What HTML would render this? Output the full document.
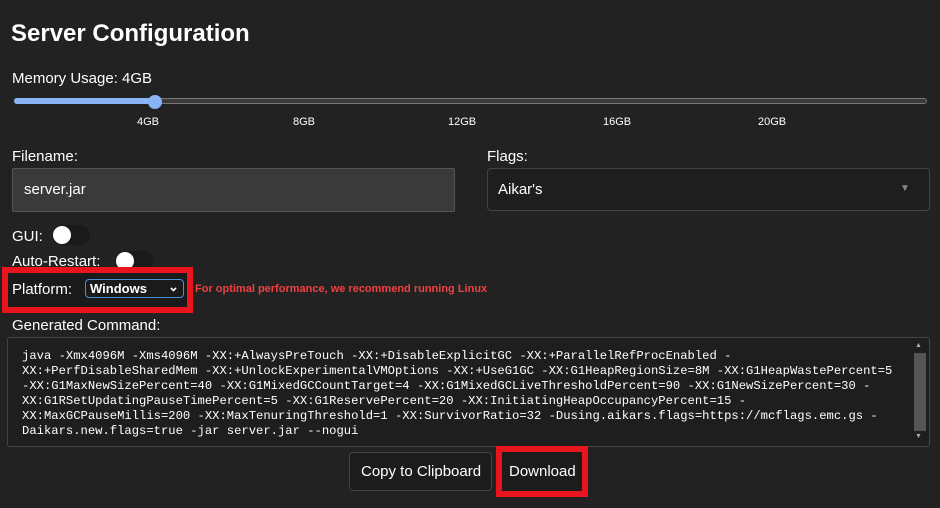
<!DOCTYPE html>
<html><head><style>
body{margin:0;width:940px;height:508px;background:#222;color:#fff;font-family:"Liberation Sans",sans-serif;position:relative;overflow:hidden}
.a{position:absolute;white-space:nowrap}
.lbl{font-size:15px;letter-spacing:0}
.tog{position:absolute;width:38px;height:20px;border-radius:10px;background:#1a1a1a}
.tog i{position:absolute;left:1px;top:1px;width:18px;height:18px;border-radius:50%;background:#fff}
pre.a{margin:0;font-family:"Liberation Mono",monospace;font-size:12.2px;line-height:15px;color:#fff;white-space:pre}
</style></head><body>
<div class="a" style="left:11px;top:20px;font-size:24px;font-weight:bold">Server Configuration</div>
<div class="a lbl" style="left:12px;top:70px">Memory Usage: 4GB</div>
<div class="a" style="left:14px;top:98px;width:913px;height:6px;border-radius:3px;background:#3a3a3a;border:1px solid #777;box-sizing:border-box"></div>
<div class="a" style="left:14px;top:98px;width:142px;height:6px;border-radius:3px;background:#8ab4f8"></div>
<div class="a" style="left:148px;top:95px;width:14px;height:14px;border-radius:50%;background:#8ab4f8"></div>
<div class="a" style="left:137px;top:116px;font-size:11px">4GB</div>
<div class="a" style="left:293px;top:116px;font-size:11px">8GB</div>
<div class="a" style="left:448px;top:116px;font-size:11px">12GB</div>
<div class="a" style="left:603px;top:116px;font-size:11px">16GB</div>
<div class="a" style="left:758px;top:116px;font-size:11px">20GB</div>
<div class="a lbl" style="left:12px;top:148px">Filename:</div>
<div class="a" style="left:12px;top:168px;width:443px;height:44px;background:#3a3a3a;border:1px solid #555;box-sizing:border-box;border-radius:2px"></div>
<div class="a lbl" style="left:24px;top:181px">server.jar</div>
<div class="a lbl" style="left:487px;top:148px">Flags:</div>
<div class="a" style="left:487px;top:168px;width:443px;height:43px;background:#1e1e1e;border:1px solid #444;box-sizing:border-box;border-radius:4px"></div>
<div class="a lbl" style="left:498px;top:181px">Aikar's</div>
<div class="a" style="left:900px;top:183px;font-size:10px;color:#888">▼</div>
<div class="a lbl" style="left:12px;top:228px">GUI:</div>
<div class="tog" style="left:52px;top:225px"><i></i></div>
<div class="a lbl" style="left:12px;top:253px">Auto-Restart:</div>
<div class="tog" style="left:115px;top:251px"><i></i></div>
<div class="a" style="left:2px;top:267px;width:191px;height:46px;border:6px solid #e8141e;box-sizing:border-box;background:#1a1a1a"></div>
<div class="a lbl" style="left:12px;top:281px">Platform:</div>
<div class="a" style="left:85px;top:279px;width:99px;height:19px;border:1px solid #4a90d9;border-radius:4px;box-sizing:border-box;background:#1a1a1a"></div>
<div class="a" style="left:90px;top:281px;font-size:13px;font-weight:bold">Windows</div>
<div class="a" style="left:168px;top:279px;font-size:13px;font-weight:bold">&#8964;</div>
<div class="a" style="left:195px;top:283px;font-size:11px;font-weight:bold;color:#f04040">For optimal performance, we recommend running Linux</div>
<div class="a lbl" style="left:12px;top:317px">Generated Command:</div>
<div class="a" style="left:7px;top:337px;width:923px;height:110px;border:1px solid #444;border-radius:3px;background:#1e1e1e;box-sizing:border-box"></div>
<div class="a" style="left:912px;top:340px;width:15px;height:104px;background:#1e1e1e"></div>
<div class="a" style="left:914px;top:353px;width:12px;height:78px;background:#555"></div>
<div class="a" style="left:915px;top:342px;font-size:7px;color:#aaa">▲</div>
<div class="a" style="left:915px;top:433px;font-size:7px;color:#aaa">▼</div>
<pre class="a" style="left:22px;top:349px">java -Xmx4096M -Xms4096M -XX:+AlwaysPreTouch -XX:+DisableExplicitGC -XX:+ParallelRefProcEnabled -
XX:+PerfDisableSharedMem -XX:+UnlockExperimentalVMOptions -XX:+UseG1GC -XX:G1HeapRegionSize=8M -XX:G1HeapWastePercent=5
-XX:G1MaxNewSizePercent=40 -XX:G1MixedGCCountTarget=4 -XX:G1MixedGCLiveThresholdPercent=90 -XX:G1NewSizePercent=30 -
XX:G1RSetUpdatingPauseTimePercent=5 -XX:G1ReservePercent=20 -XX:InitiatingHeapOccupancyPercent=15 -
XX:MaxGCPauseMillis=200 -XX:MaxTenuringThreshold=1 -XX:SurvivorRatio=32 -Dusing.aikars.flags=https://mcflags.emc.gs -
Daikars.new.flags=true -jar server.jar --nogui</pre>
<div class="a" style="left:349px;top:452px;width:143px;height:39px;border:1px solid #444;border-radius:4px;background:#1c1c1c;box-sizing:border-box"></div>
<div class="a lbl" style="left:361px;top:463px">Copy to Clipboard</div>
<div class="a" style="left:496px;top:446px;width:92px;height:51px;border:6px solid #e8141e;box-sizing:border-box;background:#1c1c1c"></div>
<div class="a lbl" style="left:509px;top:463px">Download</div>
</body></html>
